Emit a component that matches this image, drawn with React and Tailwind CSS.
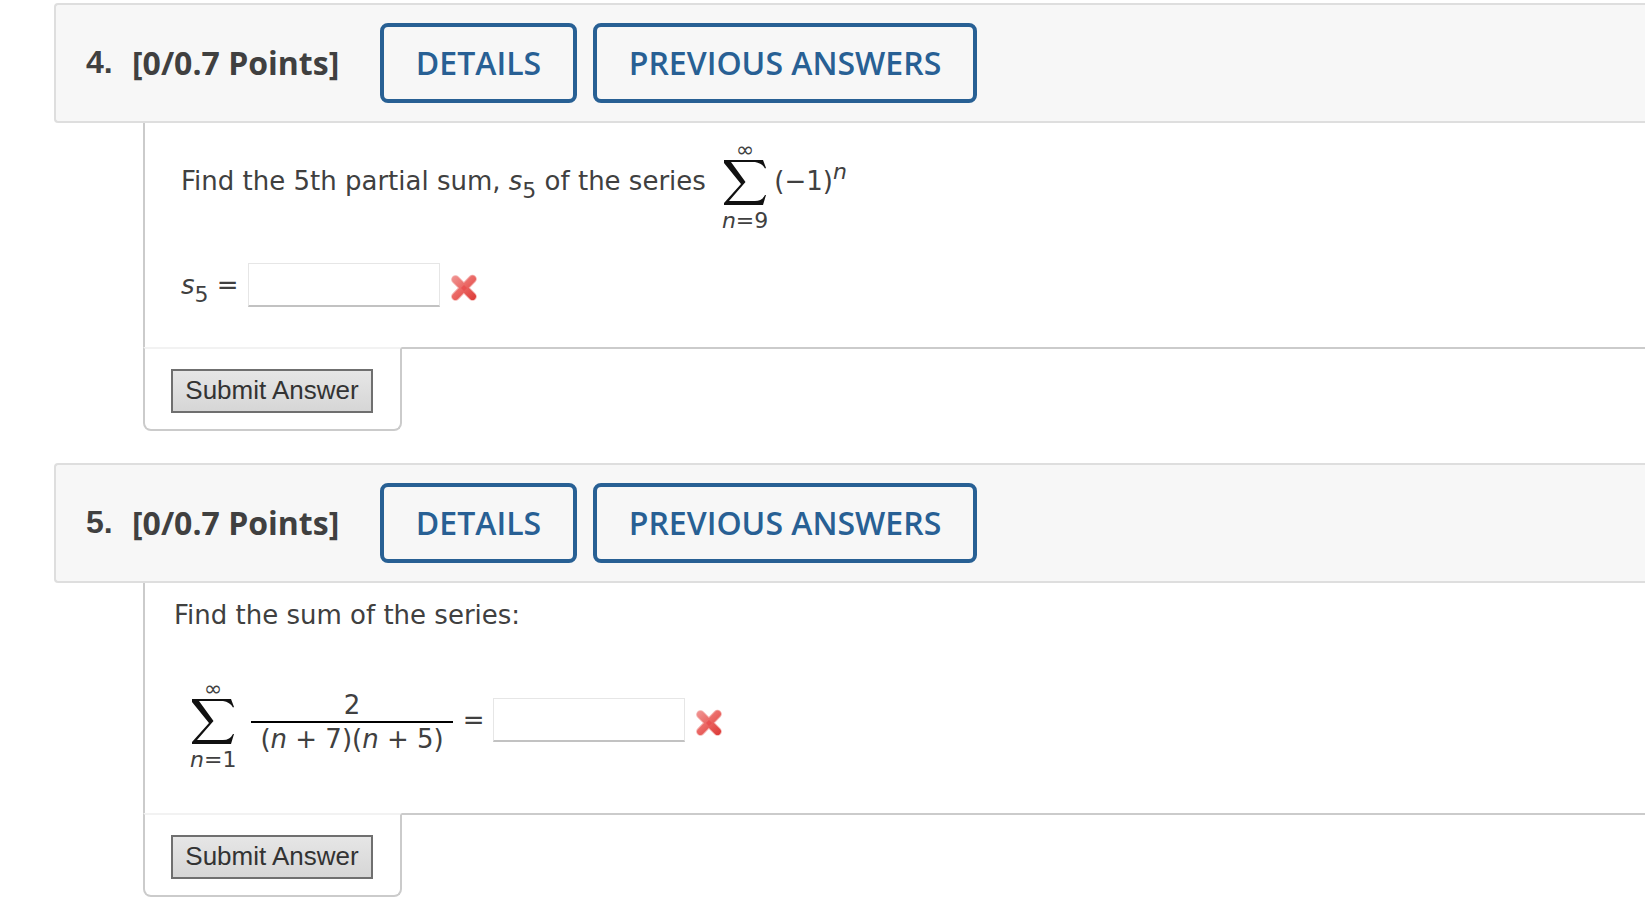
import { useId } from 'react';

function WrongMark() {
  const id = useId();
  return (
    <svg role="img" aria-label="Incorrect" viewBox="0 0 28 28" className="size-7 shrink-0">
      <defs>
        <linearGradient id={id} gradientUnits="userSpaceOnUse" x1="3" y1="2" x2="25" y2="26">
          <stop offset="0" stopColor="#f09492" />
          <stop offset="0.5" stopColor="#ea6562" />
          <stop offset="1" stopColor="#dc3a37" />
        </linearGradient>
      </defs>
      <path d="M5.5 5.5 L22.5 22.5 M22.5 5 L5.5 22.5" stroke="#f4aeac" strokeWidth="8.6" strokeLinecap="round" />
      <path d="M5.5 5.5 L22.5 22.5 M22.5 5 L5.5 22.5" stroke={`url(#${id})`} strokeWidth="6.8" strokeLinecap="round" />
      <path d="M14 11 L17 14 L14 17 L11 14 Z" fill="#e8484a" opacity="0.7" />
    </svg>
  );
}

function Sigma({ from }) {
  return (
    <span className="flex flex-col items-center text-[22px] leading-[26px]">
      <span className="h-5 leading-5">∞</span>
      <svg viewBox="0 0 42 45" className="h-[45px] w-[42px]" aria-hidden="true">
        <path
          d="M0 0 H39 L42 8 L41 8.5 Q38 3 31 2 L7 2 L21.5 22 L5 41 L31 41 Q38 41 41 35 L42 35 L39 45 H0 V43 L17 24 L0 3 Z"
          fill="#111"
        />
      </svg>
      <span className="pt-[3px]"><i>n</i>={from}</span>
    </span>
  );
}

function AnswerBox({ label }) {
  return (
    <span className="flex items-center gap-[10px]">
      <input
        type="text"
        aria-label={label}
        className="h-[44px] w-[192px] border border-b-2 border-[#e6e6e6] border-b-[#c2c2c2] bg-white px-2 outline-none"
      />
      <span className="pt-[6px]"><WrongMark /></span>
    </span>
  );
}

function PartialSum() {
  return (
    <>
      <i>s</i><sub className="-bottom-2 text-[22px]">5</sub>
    </>
  );
}

function Question({ number, children }) {
  return (
    <section className="mb-8">
      <header className="flex h-[120px] items-center rounded-l-[4px] border-2 border-r-0 border-[#dedede] bg-[#f7f7f7] pl-[30px] font-['Open_Sans',sans-serif] text-[32px]">
        <h2 className="flex w-[294px] shrink-0 items-center font-bold text-[#404040]">
          <span className="w-[46px] pb-[2px] font-['Liberation_Sans',sans-serif]">{number}.</span>
          <span>[0/0.7 Points]</span>
        </h2>
        <div className="flex gap-4 pb-[1px] font-semibold text-[#286094]">
          <button type="button" className="h-20 w-[197px] rounded-[8px] border-4 border-[#286094]">DETAILS</button>
          <button type="button" className="h-20 w-[384px] rounded-[8px] border-4 border-[#286094]">PREVIOUS ANSWERS</button>
        </div>
      </header>

      <div className="ml-[89px]">
        <div className="border-l-2 border-[#cbcbcb]">{children}</div>
        <div className="flex">
          <div className="h-[84px] w-[259px] rounded-b-[8px] border-2 border-[#cbcbcb] border-t-[#f2f2f2] pt-[20px] pl-[26px]">
            <button
              type="submit"
              className="h-[44px] w-[202px] border-2 border-[#6f6f6f] bg-linear-to-b from-[#e6e6e6] to-[#d6d6d6] pb-[2px] font-['Liberation_Sans',sans-serif] text-[26px] text-[#333]"
            >
              Submit Answer
            </button>
          </div>
          <div className="flex-1 border-t-2 border-[#cbcbcb]" />
        </div>
      </div>
    </section>
  );
}

export default function App() {
  return (
    <main className="min-h-screen overflow-hidden bg-white pt-[3px] pl-[54px] font-['DejaVu_Sans',Verdana,sans-serif] text-[26px] leading-8 text-[#404040]">
      <Question number={4}>
        <div className="h-[224px] pt-[17px] pl-9">
          <div className="flex items-center">
            <p className="pr-4 pb-3">
              Find the 5th partial sum, <PartialSum /> of the series
            </p>
            <Sigma from={9} />
            <span className="pb-3 pl-[6px]">(−1)<sup className="text-[22px]"><i>n</i></sup></span>
          </div>
          <div className="flex items-center gap-[9px] pt-[29px]">
            <span><PartialSum /> =</span>
            <AnswerBox label="s5" />
          </div>
        </div>
      </Question>

      <Question number={5}>
        <div className="h-[230px] pt-4 pl-[29px]">
          <p>Find the sum of the series:</p>
          <div className="flex items-center pt-12 pl-4">
            <Sigma from={1} />
            <span className="flex flex-col items-center pr-[10px] pb-2 pl-[15px]">
              <span>2</span>
              <span className="border-t-2 border-black px-[9px]">(<i>n</i> + 7)(<i>n</i> + 5)</span>
            </span>
            <span className="flex items-center gap-[9px] pb-3">
              <span>=</span>
              <AnswerBox label="Sum of the series" />
            </span>
          </div>
        </div>
      </Question>
    </main>
  );
}
